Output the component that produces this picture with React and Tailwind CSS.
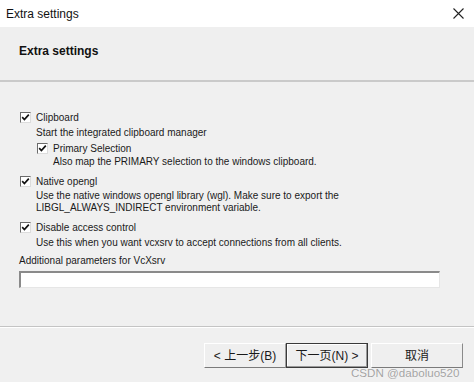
import React from "react"

function Check({ className = "" }) {
  return (
    <span className={`flex h-[11px] w-[11px] shrink-0 items-center justify-center border border-t-[#6b6b6b] border-l-[#6b6b6b] border-r-[#dcdcdc] border-b-[#dcdcdc] bg-white ${className}`}>
      <svg width="9" height="9" viewBox="0 0 9 9">
        <path d="M1.2 4.2 L3.4 6.5 L7.8 1.6" fill="none" stroke="#111" strokeWidth="1.7" />
      </svg>
    </span>
  )
}

export default function App() {
  const body = "font-['Liberation_Sans',Arial,sans-serif] text-[10px] leading-[13px] text-[#1a1a1a]"
  const cjk = "font-['Liberation_Sans','Noto_Sans_CJK_SC',sans-serif] text-[12px] text-[#1a1a1a]"

  return (
    <div className="relative flex h-[382px] w-[474px] flex-col overflow-hidden bg-[#f0f0f0]">
      {/* title bar */}
      <div className="flex h-[27px] items-center justify-between bg-white pl-[6px] pr-[10px]">
        <span className="font-['Liberation_Sans',Arial,sans-serif] text-[12px] text-[#111]">Extra settings</span>
        <svg width="11" height="11" viewBox="0 0 11 11">
          <path d="M0.5 0.5 L10.5 10.5 M10.5 0.5 L0.5 10.5" stroke="#222" strokeWidth="1.1" />
        </svg>
      </div>

      {/* header */}
      <div className="h-[53px] bg-[#efefef] pl-[19px] pt-[10px]">
        <span className="font-['Liberation_Sans',Arial,sans-serif] text-[12px] font-bold text-[#111]">Extra settings</span>
      </div>
      <div className="h-[2px] bg-[#cacaca]" />

      {/* options */}
      <div className={`flex h-[244px] flex-col pl-[20px] pt-[29px] ${body}`}>
        <div className="flex h-[13px] items-center gap-[5px]">
          <Check />
          <span>Clipboard</span>
        </div>
        <div className="mt-[2px] pl-[16px]">Start the integrated clipboard manager</div>
        <div className="mt-[3px] flex h-[13px] items-center gap-[5px] pl-[17px]">
          <Check />
          <span>Primary Selection</span>
        </div>
        <div className="pl-[33px]">Also map the PRIMARY selection to the windows clipboard.</div>

        <div className="mt-[7px] flex h-[13px] items-center gap-[5px]">
          <Check />
          <span>Native opengl</span>
        </div>
        <div className="mt-[2px] pl-[16px] leading-[12px]">
          Use the native windows opengl library (wgl). Make sure to export the
          <br />
          LIBGL_ALWAYS_INDIRECT environment variable.
        </div>

        <div className="mt-[7px] flex h-[13px] items-center gap-[5px]">
          <Check />
          <span>Disable access control</span>
        </div>
        <div className="mt-[2px] pl-[16px]">Use this when you want vcxsrv to accept connections from all clients.</div>

        <div className="mt-[5px] -ml-[1px]">Additional parameters for VcXsrv</div>
        <input
          className="mt-[4px] -ml-[1px] h-[17px] w-[421px] border border-t-2 border-l-2 border-t-[#8a8a8a] border-l-[#8a8a8a] border-r-[#e6e6e6] border-b-[#e6e6e6] bg-white outline-none"
          defaultValue=""
        />
      </div>

      {/* footer */}
      <div className="h-px bg-[#c4c4c4]" />
      <div className="h-px bg-white" />
      <div className="flex flex-1 items-start pl-[204px] pt-[15px]">
        <button className={`h-[25px] w-[82px] border border-t-white border-l-white border-r-[#a0a0a0] border-b-[#7a7a7a] bg-[#efefef] ${cjk}`}>
          &lt; 上一步(B)
        </button>
        <button className={`h-[25px] w-[82px] border border-[#3a3a3a] bg-[#efefef] shadow-[inset_-1px_-1px_0_#9a9a9a,inset_1px_1px_0_#fff] ${cjk}`}>
          下一页(N) &gt;
        </button>
        <button className={`ml-[3px] h-[25px] w-[92px] border border-t-white border-l-white border-r-[#8a8a8a] border-b-[#7a7a7a] bg-[#efefef] ${cjk}`}>
          取消
        </button>
      </div>

      {/* watermark */}
      <span className="absolute left-[351px] top-[364px] font-['Liberation_Sans',Arial,sans-serif] text-[11.6px] text-[#a3a3a3] [text-shadow:0_0_1px_#fff]">
        CSDN @daboluo520
      </span>
    </div>
  )
}
